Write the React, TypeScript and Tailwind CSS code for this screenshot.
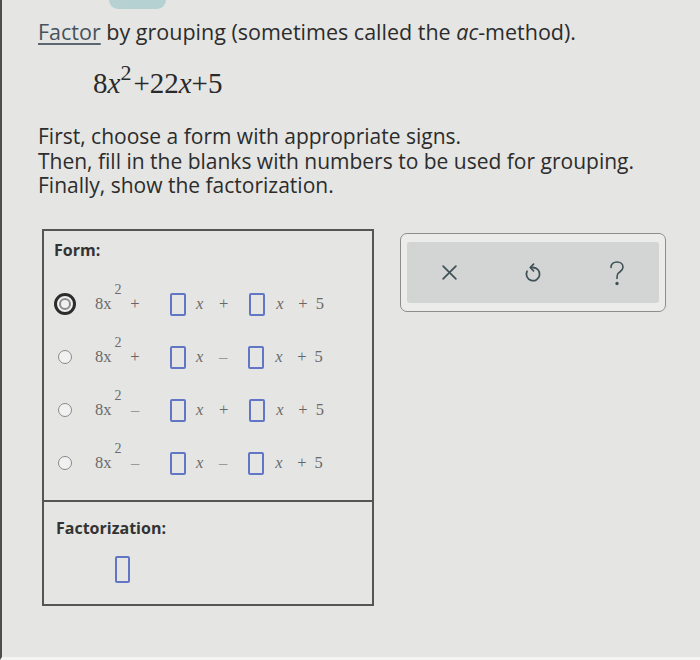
import React from "react";

const sans = { fontFamily: '"Open Sans", "Liberation Sans", sans-serif' };
const serif = { fontFamily: '"Liberation Serif", "Times New Roman", serif' };

const Blank = ({ big = false }: { big?: boolean }) => (
  <span
    className={`inline-block rounded-[2px] border-2 border-[#6177c6] ${
      big ? "h-[27px] w-[15px]" : "h-[23px] w-[16px]"
    }`}
  />
);

const Radio = ({ checked }: { checked?: boolean }) =>
  checked ? (
    <span className="flex h-[22px] w-[22px] items-center justify-center rounded-full border-[3px] border-[#2c2c2c] bg-[#f0f0f0]">
      <span className="h-[12px] w-[12px] rounded-full border-2 border-[#8c8c8c]" />
    </span>
  ) : (
    <span className="h-[14px] w-[14px] rounded-full border-[1.5px] border-[#8a8a8a] bg-[#f1f1f1]" />
  );

const Sign = ({ s }: { s: string }) => (
  <span className={`w-[12px] text-center ${s === "+" ? "text-[#666]" : "text-[#9a9a9a]"}`}>
    {s === "+" ? "+" : "\u2013"}
  </span>
);

const FormRow = ({ a, b, checked }: { a: string; b: string; checked?: boolean }) => (
  <div className="flex h-[53px] items-center text-[16.5px] leading-[20px] text-[#6a6a6a]" style={serif}>
    <div className="flex w-[42px] justify-center">
      <Radio checked={checked} />
    </div>
    <span className="ml-[9px] w-[34px]">
      8x<span className="relative -top-[15px] ml-[3px] text-[14px] leading-none">2</span>
    </span>
    <Sign s={a} />
    <span className="ml-[29px] flex">
      <Blank />
    </span>
    <span className="ml-[10px] w-[9px] italic">x</span>
    <span className="ml-[14px]">
      <Sign s={b} />
    </span>
    <span className="ml-[21px] flex">
      <Blank />
    </span>
    <span className="ml-[11px] w-[9px] italic">x</span>
    <span className="ml-[13px]">
      <Sign s="+" />
    </span>
    <span className="ml-[8px]">5</span>
  </div>
);

const XIcon = () => (
  <svg width="17" height="17" viewBox="0 0 16 16" fill="none" stroke="#3e5156" strokeWidth="1.6" strokeLinecap="round">
    <path d="M2 2 L14 14 M14 2 L2 14" />
  </svg>
);

const UndoIcon = () => (
  <svg width="20" height="22" viewBox="0 0 18 20" fill="none" stroke="#3e5156" strokeWidth="1.6" strokeLinecap="round" strokeLinejoin="round">
    <path d="M7.5 5 H9 A6 6 0 1 1 3.6 8.4" />
    <path d="M9.5 2 L6.5 5 L9.5 8" />
  </svg>
);

const HelpIcon = () => (
  <svg width="16" height="25" viewBox="0 0 16 25" fill="none" stroke="#3e5156" strokeWidth="1.6" strokeLinecap="round">
    <path d="M2 6.5 C2 3 4.5 1 8 1 C11.5 1 14 3 14 6.2 C14 9.5 11 10.5 9 12.5 C8 13.6 8 15 8 17.5" />
    <circle cx="8" cy="22.5" r="0.9" fill="#3e5156" />
  </svg>
);

export default function App() {
  return (
    <div
      className="flex h-[660px] w-[700px] flex-col overflow-hidden border-b-[3px] border-l-2 border-b-[#f4f4f2] border-l-[#4d4d4d] bg-[#e5e5e3] text-[#2c2c2c]"
      style={sans}
    >
      <div className="ml-[107px] h-[9px] w-[57px] shrink-0 rounded-b-[10px] bg-[#b5d1d1]" />

      <p className="ml-[36px] mt-[9px] text-[21.5px] leading-[28px]">
        <span className="text-[#46525c] underline decoration-[#5a6670] underline-offset-[3px]">Factor</span> by grouping
        (sometimes called the <i>ac</i>-method).
      </p>

      <p className="ml-[91px] mt-[21px] h-[32px] text-[29px] leading-[32px] text-[#2a2a2a]" style={serif}>
        8<i>x</i>
        <span className="relative -top-[13px] text-[22px] leading-none">2</span>
        <span className="ml-[2px]">+</span>22<i>x</i>+5
      </p>

      <div className="ml-[36px] mt-[25px] text-[21px] leading-[24.5px]">
        <p>First, choose a form with appropriate signs.</p>
        <p>Then, fill in the blanks with numbers to be used for grouping.</p>
        <p>Finally, show the factorization.</p>
      </div>

      <div className="ml-[40px] mt-[31px] flex items-start gap-[26px]">
        <div className="w-[332px] border-2 border-[#555]">
          <div className="h-[269px] pt-[8px]">
            <p className="ml-[10px] text-[16px] font-bold leading-[22px] text-[#333]">Form:</p>
            <div className="mt-[17px]">
              <FormRow a="+" b="+" checked />
              <FormRow a="+" b="-" />
              <FormRow a="-" b="+" />
              <FormRow a="-" b="-" />
            </div>
          </div>
          <div className="h-[104px] border-t-2 border-[#555] pt-[15px]">
            <p className="ml-[12px] text-[16px] font-bold leading-[22px] text-[#333]">Factorization:</p>
            <div className="ml-[71px] mt-[17px] flex">
              <Blank big />
            </div>
          </div>
        </div>

        <div className="mt-[4px] w-[266px] rounded-[7px] border-[1.5px] border-[#8d8d8d] bg-[#ececeb] px-[6px] py-[8px]">
          <div className="grid h-[61px] grid-cols-3 items-center rounded-[3px] bg-[#d3d5d4]">
            <div className="flex justify-center">
              <XIcon />
            </div>
            <div className="flex justify-center pt-[2px]">
              <UndoIcon />
            </div>
            <div className="flex justify-center pt-[3px]">
              <HelpIcon />
            </div>
          </div>
        </div>
      </div>
    </div>
  );
}
